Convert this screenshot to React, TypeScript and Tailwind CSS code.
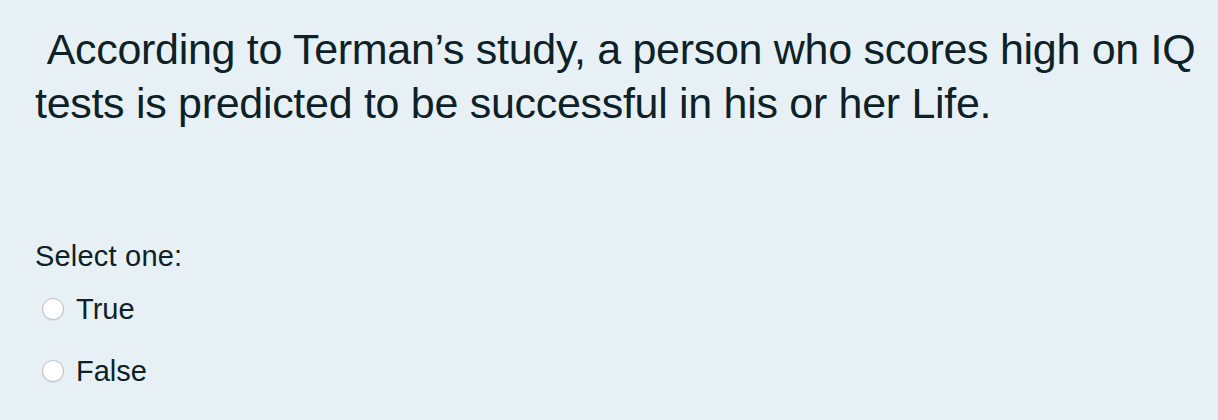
import React, { useState } from 'react';

const options = ['True', 'False'];

const App: React.FC = () => {
  const [answer, setAnswer] = useState<string | null>(null);

  return (
    <div className="min-h-[420px] w-full bg-[#e7f1f5] text-[#0e2127] font-['Liberation_Sans',Arial,sans-serif]">
      <div className="pl-[35px] pr-[15px] pt-[22px]">
        {/* Question text */}
        <p className="text-[43px] leading-[54px] tracking-[-0.3px]">
          {'\u00a0'}According to Terman’s study, a person who scores high on IQ tests is predicted to be successful in his or her Life.
        </p>

        {/* Answer block */}
        <div className="mt-[110px]">
          <div className="text-[29px] leading-[32px] tracking-[0.2px]">Select one:</div>
          <div className="mt-[21px] flex flex-col gap-[30px]">
            {options.map((opt) => (
              <label key={opt} className="flex items-center gap-[12px] pl-[7px] cursor-pointer">
                <input
                  type="radio"
                  name="answer"
                  checked={answer === opt}
                  onChange={() => setAnswer(opt)}
                  className="appearance-none w-[22px] h-[22px] rounded-full bg-white border border-[#bcc0c3] shadow-[0_1px_1px_rgba(0,0,0,0.08)]"
                />
                <span className="text-[29px] leading-[32px]">{opt}</span>
              </label>
            ))}
          </div>
        </div>
      </div>
    </div>
  );
};

export default App;
